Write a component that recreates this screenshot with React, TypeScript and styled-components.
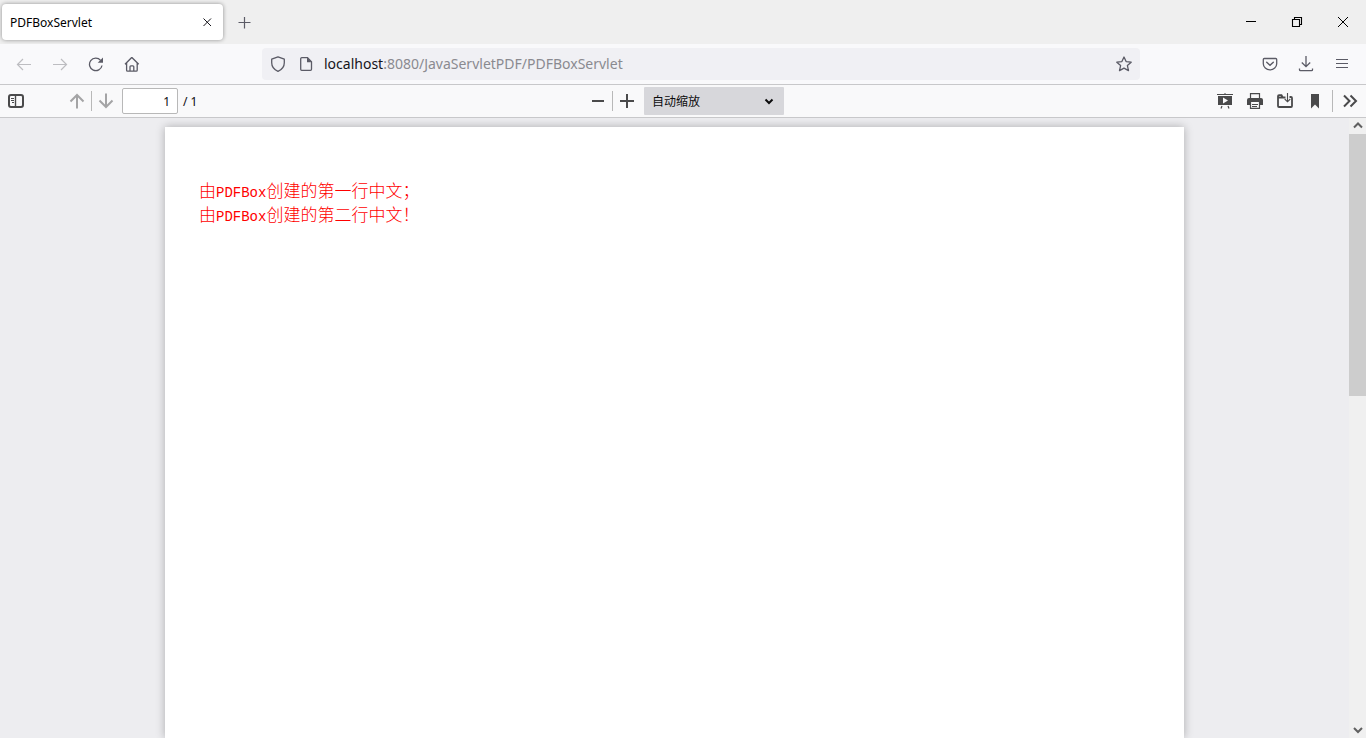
import React from "react";
import styled, { createGlobalStyle } from "styled-components";

const GlobalStyle = createGlobalStyle`
  *, *::before, *::after { box-sizing: border-box; }
  body {
    margin: 0;
    font-family: "Noto Sans", "Noto Sans CJK SC", sans-serif;
    font-size: 12px;
    color: #0c0c0d;
  }
  button, input, select { font: inherit; color: inherit; }
`;

const Browser = styled.div`
  display: flex;
  flex-direction: column;
  height: 100vh;
  overflow: hidden;
  background: #ededf0;
`;

const TabStrip = styled.header`
  display: flex;
  align-items: center;
  height: 44px;
  padding-left: 2px;
  background: #efefef;
`;

const Tab = styled.div`
  display: flex;
  align-items: center;
  justify-content: space-between;
  width: 221px;
  height: 36px;
  padding: 0 4px 0 8px;
  border-radius: 4px;
  background: #fff;
  box-shadow: 0 0 4px rgba(0, 0, 0, 0.4);
  color: #000;
`;

const IconButton = styled.button<{ $w: number; $h: number; $color?: string }>`
  display: flex;
  flex: none;
  align-items: center;
  justify-content: center;
  width: ${(p) => p.$w}px;
  height: ${(p) => p.$h}px;
  padding: 0;
  border: 0;
  background: none;
  color: ${(p) => p.$color ?? "#5b5b66"};
`;

const NewTab = styled(IconButton)`
  margin-left: 5px;
`;

const WindowControls = styled.div`
  display: flex;
  margin-left: auto;
`;

const NavBar = styled.nav`
  display: flex;
  align-items: center;
  height: 40px;
  padding: 0 6px;
  background: #f9f9fb;
`;

const UrlBar = styled.div`
  display: flex;
  flex: 1;
  align-items: center;
  height: 32px;
  margin: 0 112px;
  padding: 0 2px;
  border-radius: 4px;
  background: #f0f0f4;
`;

const Address = styled.a`
  flex: 1;
  margin-left: 4px;
  font-size: 14px;
  line-height: 20px;
  color: #8a8a90;
  text-decoration: none;
  white-space: nowrap;
`;

const Host = styled.span`
  color: #15141a;
`;

const PdfToolbar = styled.div`
  display: grid;
  grid-template-columns: 1fr auto 1fr;
  align-items: center;
  height: 34px;
  padding: 0 2px;
  border-top: 1px solid #c8c8ca;
  border-bottom: 1px solid #c8c8ca;
  background: #f9f9fa;
`;

const Group = styled.div<{ $end?: boolean }>`
  display: flex;
  align-items: center;
  justify-content: ${(p) => (p.$end ? "flex-end" : "flex-start")};
  gap: ${(p) => (p.$end ? 2 : 0)}px;
`;

const PageGroup = styled(Group)`
  margin-left: 33px;
`;

const ZoomGroup = styled(Group)`
  padding-left: 2px;
`;

const Separator = styled.span`
  width: 1px;
  height: 20px;
  background: #b8b8b8;
`;

const ToolsSeparator = styled(Separator)`
  height: 22px;
  margin: 0 1px;
`;

const PageInput = styled.input`
  width: 56px;
  height: 26px;
  margin: 0 5px 0 2px;
  padding: 0 7px;
  border: 1px solid #b8b8b8;
  border-radius: 2px;
  background: #fff;
  text-align: right;
`;

const SelectWrap = styled.div`
  position: relative;
  width: 140px;
  height: 28px;
  margin-left: 3px;

  svg {
    position: absolute;
    top: 6px;
    right: 7px;
    pointer-events: none;
  }
`;

const ZoomSelect = styled.select`
  appearance: none;
  width: 100%;
  height: 100%;
  padding: 0 8px;
  border: 0;
  border-radius: 1px;
  background: #d7d7db;
`;

const Viewer = styled.main`
  display: flex;
  flex: 1;
  min-height: 0;
`;

const Canvas = styled.div`
  flex: 1;
  padding: 9px 16px 0;
  overflow: hidden;
`;

const Sheet = styled.article`
  max-width: 1019px;
  height: 100%;
  min-height: 600px;
  margin: 0 auto;
  padding: 54px 34px;
  background: #fff;
  box-shadow: 0 0 9px rgba(0, 0, 0, 0.28);
`;

const Line = styled.p`
  margin: 0;
  font-family: "Liberation Mono", "Noto Sans CJK SC", monospace;
  font-size: 17px;
  font-weight: 300;
  line-height: 24px;
  color: #f00;
`;

const Latin = styled.span`
  font-size: 14px;
`;

const ScrollBar = styled.div`
  display: flex;
  flex: none;
  flex-direction: column;
  width: 17px;
  background: #f0f0f0;
`;

const Track = styled.div`
  display: flex;
  flex: 1;
  flex-direction: column;
`;

const Thumb = styled.div`
  height: 44.7%;
  background: #cdcdcd;
`;

const Icon = ({ children, size = 16 }: { children: React.ReactNode; size?: number }) => (
  <svg width={size} height={size} viewBox={`0 0 ${size} ${size}`} fill="none" stroke="currentColor" strokeWidth="1.2" aria-hidden="true">
    {children}
  </svg>
);

const NavButton = ({ label, color, children }: { label: string; color?: string; children: React.ReactNode }) => (
  <IconButton $w={36} $h={32} $color={color} aria-label={label}>
    <Icon>{children}</Icon>
  </IconButton>
);

const PdfButton = ({ label, color = "#4a4a4b", children }: { label: string; color?: string; children: React.ReactNode }) => (
  <IconButton $w={28} $h={28} $color={color} aria-label={label}>
    <Icon>{children}</Icon>
  </IconButton>
);

export default function App() {
  return (
    <>
      <GlobalStyle />
      <Browser>
        <TabStrip>
          <Tab>
            <span>PDFBoxServlet</span>
            <IconButton $w={24} $h={24} $color="#15141a" aria-label="关闭标签页">
              <Icon><path d="M4.500 4.500l7.500 7.500M12 4.500l-7.500 7.500" strokeWidth="1" /></Icon>
            </IconButton>
          </Tab>
          <NewTab $w={32} $h={32} aria-label="新建标签页">
            <Icon><path d="M8.500 3v11.500M2.500 8.500H14.500" /></Icon>
          </NewTab>
          <WindowControls>
            <IconButton $w={46} $h={44} $color="#000" aria-label="最小化">
              <Icon><path d="M3 7.500h10" strokeWidth="1" /></Icon>
            </IconButton>
            <IconButton $w={46} $h={44} $color="#000" aria-label="还原">
              <Icon><path d="M3.500 5.500h7v7h-7zM5.500 5.500v-2h7v7h-2" strokeWidth="1.100" /></Icon>
            </IconButton>
            <IconButton $w={46} $h={44} $color="#000" aria-label="关闭">
              <Icon><path d="M3 3l10 10M13 3L3 13" strokeWidth="1" /></Icon>
            </IconButton>
          </WindowControls>
        </TabStrip>

        <NavBar>
          <NavButton label="后退" color="#bdbdc1">
            <path d="M15 8.500H1.500M7 3L1.500 8.500 7 14" />
          </NavButton>
          <NavButton label="前进" color="#bdbdc1">
            <path d="M1 8.500h13.500M9 3l5.500 5.500L9 14" />
          </NavButton>
          <NavButton label="刷新">
            <path d="M14 9.500A6.300 6.300 0 1 1 12.600 4.300" strokeWidth="1.300" />
            <path d="M15 1.500v5.300h-5.300z" fill="currentColor" stroke="none" />
          </NavButton>
          <NavButton label="主页">
            <path d="M1 8.300L7.500 1.700h.6L14.700 8.300M2.600 7v7.200q0 1 1 1h8.600q1 0 1-1V7M6 15v-4.300q0-.9.900-.9h2q.9 0 .9.900V15" strokeWidth="1.300" />
          </NavButton>
          <UrlBar>
            <IconButton $w={28} $h={28} aria-label="跟踪保护">
              <Icon><path d="M8 .8L14.300 3.200v3.500c0 4.300-2.600 7-6.300 8.700-3.700-1.700-6.300-4.400-6.300-8.700V3.200z" strokeLinejoin="round" strokeWidth="1.300" /></Icon>
            </IconButton>
            <IconButton $w={28} $h={28} aria-label="站点信息">
              <Icon>
                <path d="M3.200 1.700h6.300l4 4v7.600q0 1-1 1H3.700q-1 0-1-1V2.700q0-1 1-1z" strokeWidth="1.300" />
                <path d="M9 1.500v4.700h4.700z" fill="currentColor" stroke="none" />
              </Icon>
            </IconButton>
            <Address href="#">
              <Host>localhost</Host>:8080/JavaServletPDF/PDFBoxServlet
            </Address>
            <IconButton $w={28} $h={28} aria-label="添加书签">
              <Icon><path d="M8 1l2.100 4.600 5.100.6-3.800 3.400 1.100 5L8 12.100l-4.500 2.500 1.100-5L.8 6.200l5.100-.6z" strokeLinejoin="round" strokeWidth="1.300" /></Icon>
            </IconButton>
          </UrlBar>
          <NavButton label="Pocket">
            <path d="M2.300 2.500h11.400q1 0 1 1v4.200a6.700 6.200 0 0 1-13.400 0V3.500q0-1 1-1z" strokeWidth="1.300" />
            <path d="M4.700 6.200L8 9.300l3.300-3.100" strokeWidth="1.400" strokeLinecap="round" />
          </NavButton>
          <NavButton label="下载">
            <path d="M8 0v10.500M3.800 6.500L8 10.700l4.200-4.200M1.500 12.500v1.200q0 1 1 1h11q1 0 1-1v-1.200" strokeWidth="1.300" />
          </NavButton>
          <NavButton label="菜单">
            <path d="M2 3.500h12M2 7.500h12M2 11.500h12" />
          </NavButton>
        </NavBar>

        <PdfToolbar>
          <Group>
            <PdfButton label="切换侧栏">
              <rect x="1" y="2" width="14" height="12" rx="2" strokeWidth="2" />
              <path d="M7.500 2v12" strokeWidth="1.400" />
              <path d="M3 5.500h3M3 7.500h3M4 9.500h2" strokeWidth="1" />
            </PdfButton>
            <PageGroup>
              <PdfButton label="上一页" color="#a4a4a5">
                <path d="M8 15.500V2M1.500 8.500L8 2l6.500 6.500" strokeWidth="2" />
              </PdfButton>
              <Separator />
              <PdfButton label="下一页" color="#a4a4a5">
                <path d="M8 .5V14M1.500 7.500L8 14l6.500-6.500" strokeWidth="2" />
              </PdfButton>
              <PageInput aria-label="页码" defaultValue="1" />
              <span>/ 1</span>
            </PageGroup>
          </Group>
          <ZoomGroup>
            <PdfButton label="缩小"><path d="M2 8h12" strokeWidth="2" /></PdfButton>
            <Separator />
            <PdfButton label="放大"><path d="M1 8h14M8 1v14" strokeWidth="2" /></PdfButton>
            <SelectWrap>
              <ZoomSelect aria-label="缩放" defaultValue="auto">
                <option value="auto">自动缩放</option>
              </ZoomSelect>
              <Icon><path d="M4.500 6.500L8 10l3.500-3.500" strokeWidth="2" /></Icon>
            </SelectWrap>
          </ZoomGroup>
          <Group $end>
            <PdfButton label="演示模式">
              <path d="M0 1.500h16M8 0v2" strokeWidth="1" />
              <path d="M1 3h14v9H1zM6 4.500v6l5-3z" fill="currentColor" fillRule="evenodd" stroke="none" />
              <path d="M5 13l-1 2.500M11 13l1 2.500" />
            </PdfButton>
            <PdfButton label="打印">
              <path d="M3.500 5V.6h9V5" />
              <path d="M2 5h12q2 0 2 2v5h-3V9H3v3H0V7q0-2 2-2z" fill="currentColor" stroke="none" />
              <path d="M3.500 9v6.400h9V9M5 11.500h6M5 13.500h5" />
            </PdfButton>
            <PdfButton label="下载文件">
              <path d="M8.500 4.500H5.800L4.500 2.200H2q-1 0-1 1V13q0 1 1 1h12q1 0 1-1V5q0-1-1-1h-1.500M1 4.500h5" strokeWidth="1.800" />
              <path d="M10.500 0v9M7.700 6l2.800 2.800L13.300 6" strokeWidth="1.100" />
            </PdfButton>
            <PdfButton label="当前视图">
              <path d="M4 1h8v14.500l-4-4-4 4z" fill="currentColor" stroke="none" />
            </PdfButton>
            <ToolsSeparator />
            <PdfButton label="工具">
              <path d="M2 2.500L7.500 8 2 13.500M8.500 2.500L14 8l-5.500 5.500" strokeWidth="2" />
            </PdfButton>
          </Group>
        </PdfToolbar>

        <Viewer>
          <Canvas>
            <Sheet>
              <Line>由<Latin>PDFBox</Latin>创建的第一行中文；</Line>
              <Line>由<Latin>PDFBox</Latin>创建的第二行中文！</Line>
            </Sheet>
          </Canvas>
          <ScrollBar>
            <IconButton $w={17} $h={16} $color="#606060" aria-label="向上滚动">
              <Icon><path d="M4 9.500L8 5.500l4 4" strokeWidth="2" /></Icon>
            </IconButton>
            <Track><Thumb /></Track>
            <IconButton $w={17} $h={17} $color="#606060" aria-label="向下滚动">
              <Icon><path d="M4 6l4 4 4-4" strokeWidth="2" /></Icon>
            </IconButton>
          </ScrollBar>
        </Viewer>
      </Browser>
    </>
  );
}
